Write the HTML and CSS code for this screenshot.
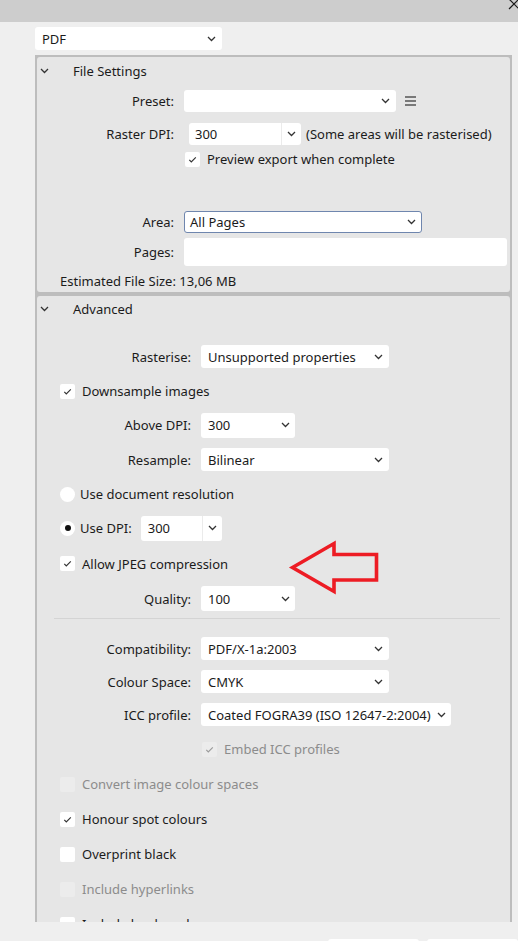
FILE: index.html
```html
<!DOCTYPE html>
<html lang="en">
<head>
<meta charset="utf-8">
<title>Export PDF</title>
<link rel="stylesheet" href="styles.css">
</head>
<body>
<div class="titlebar">
  <svg class="close" width="12" height="12" viewBox="0 0 12 12"><path d="M1 1 L11 11 M1 11 L11 1" stroke="#1a1a1a" stroke-width="1.2" fill="none"/></svg>
</div>

<div class="format-row">
  <div class="select select-format"><span>PDF</span><svg class="chev" width="9" height="6" viewBox="0 0 9 6"><path d="M1 1 L4.5 4.5 L8 1" fill="none" stroke="#333" stroke-width="1.3"/></svg></div>
</div>

<div class="panel">
  <section class="group file">
    <div class="group-head">
      <svg class="chev head-chev" width="9" height="6" viewBox="0 0 9 6"><path d="M1 1 L4.5 4.5 L8 1" fill="none" stroke="#333" stroke-width="1.3"/></svg>
      <span>File Settings</span>
    </div>
    <div class="row h34">
      <span class="lbl">Preset:</span>
      <div class="select w-preset h22"><span></span><svg class="chev" width="9" height="6" viewBox="0 0 9 6"><path d="M1 1 L4.5 4.5 L8 1" fill="none" stroke="#333" stroke-width="1.3"/></svg></div>
      <svg class="menu" width="11" height="10" viewBox="0 0 11 10"><path d="M0 1 H11 M0 5 H11 M0 9 H11" stroke="#555" stroke-width="1.5"/></svg>
    </div>
    <div class="row h31">
      <span class="lbl">Raster DPI:</span>
      <div class="combo w-raster h22 shift5"><span class="val">300</span><span class="drop"><svg class="chev" width="9" height="6" viewBox="0 0 9 6"><path d="M1 1 L4.5 4.5 L8 1" fill="none" stroke="#333" stroke-width="1.3"/></svg></span></div>
      <span class="note">(Some areas will be rasterised)</span>
    </div>
    <div class="row h20 pad-preview">
      <span class="cb"><svg width="15" height="15" viewBox="0 0 15 15"><path d="M4.3 7.8 L6.3 9.8 L10.8 5.3" fill="none" stroke="#333" stroke-width="1.2"/></svg></span>
      <span>Preview export when complete</span>
    </div>
    <div class="spacer36"></div>
    <div class="row h33">
      <span class="lbl">Area:</span>
      <div class="select w-area h22 focus"><span>All Pages</span><svg class="chev" width="9" height="6" viewBox="0 0 9 6"><path d="M1 1 L4.5 4.5 L8 1" fill="none" stroke="#333" stroke-width="1.3"/></svg></div>
    </div>
    <div class="row h28">
      <span class="lbl">Pages:</span>
      <div class="input w-pages"></div>
    </div>
    <div class="row h22 est">Estimated File Size: 13,06 MB</div>
  </section>

  <section class="group adv">
    <div class="group-head h26">
      <svg class="chev head-chev" width="9" height="6" viewBox="0 0 9 6"><path d="M1 1 L4.5 4.5 L8 1" fill="none" stroke="#333" stroke-width="1.3"/></svg>
      <span>Advanced</span>
    </div>
    <div class="adv-body">
      <div class="row h35">
        <span class="lbl">Rasterise:</span>
        <div class="select w-188"><span>Unsupported properties</span><svg class="chev" width="9" height="6" viewBox="0 0 9 6"><path d="M1 1 L4.5 4.5 L8 1" fill="none" stroke="#333" stroke-width="1.3"/></svg></div>
      </div>
      <div class="row h34 opt">
        <span class="cb"><svg width="15" height="15" viewBox="0 0 15 15"><path d="M4.3 7.8 L6.3 9.8 L10.8 5.3" fill="none" stroke="#333" stroke-width="1.2"/></svg></span>
        <span>Downsample images</span>
      </div>
      <div class="row h34">
        <span class="lbl">Above DPI:</span>
        <div class="combo w-94 h25"><span class="val">300</span><span class="drop plain"><svg class="chev" width="9" height="6" viewBox="0 0 9 6"><path d="M1 1 L4.5 4.5 L8 1" fill="none" stroke="#333" stroke-width="1.3"/></svg></span></div>
      </div>
      <div class="row h35">
        <span class="lbl">Resample:</span>
        <div class="select w-188"><span>Bilinear</span><svg class="chev" width="9" height="6" viewBox="0 0 9 6"><path d="M1 1 L4.5 4.5 L8 1" fill="none" stroke="#333" stroke-width="1.3"/></svg></div>
      </div>
      <div class="row h34 opt">
        <span class="rb"></span>
        <span>Use document resolution</span>
      </div>
      <div class="row h34 opt">
        <span class="rb on"></span>
        <span>Use DPI:</span>
        <div class="combo w-81 h25 usedpi"><span class="val">300</span><span class="drop"><svg class="chev" width="9" height="6" viewBox="0 0 9 6"><path d="M1 1 L4.5 4.5 L8 1" fill="none" stroke="#333" stroke-width="1.3"/></svg></span></div>
      </div>
      <div class="row h37 opt">
        <span class="cb"><svg width="15" height="15" viewBox="0 0 15 15"><path d="M4.3 7.8 L6.3 9.8 L10.8 5.3" fill="none" stroke="#333" stroke-width="1.2"/></svg></span>
        <span>Allow JPEG compression</span>
      </div>
      <div class="row h33">
        <span class="lbl">Quality:</span>
        <div class="combo w-94 h25"><span class="val">100</span><span class="drop plain"><svg class="chev" width="9" height="6" viewBox="0 0 9 6"><path d="M1 1 L4.5 4.5 L8 1" fill="none" stroke="#333" stroke-width="1.3"/></svg></span></div>
      </div>
      <div class="sep"></div>
      <div class="row h33">
        <span class="lbl">Compatibility:</span>
        <div class="select w-188"><span>PDF/X-1a:2003</span><svg class="chev" width="9" height="6" viewBox="0 0 9 6"><path d="M1 1 L4.5 4.5 L8 1" fill="none" stroke="#333" stroke-width="1.3"/></svg></div>
      </div>
      <div class="row h33">
        <span class="lbl">Colour Space:</span>
        <div class="select w-188"><span>CMYK</span><svg class="chev" width="9" height="6" viewBox="0 0 9 6"><path d="M1 1 L4.5 4.5 L8 1" fill="none" stroke="#333" stroke-width="1.3"/></svg></div>
      </div>
      <div class="row h33">
        <span class="lbl">ICC profile:</span>
        <div class="select w-icc"><span>Coated FOGRA39 (ISO 12647-2:2004)</span><svg class="chev" width="9" height="6" viewBox="0 0 9 6"><path d="M1 1 L4.5 4.5 L8 1" fill="none" stroke="#333" stroke-width="1.3"/></svg></div>
      </div>
      <div class="row h36 opt-embed disabled">
        <span class="cb off"><svg width="15" height="15" viewBox="0 0 15 15"><path d="M4.3 7.8 L6.3 9.8 L10.8 5.3" fill="none" stroke="#9a9a9a" stroke-width="1.2"/></svg></span>
        <span>Embed ICC profiles</span>
      </div>
      <div class="row h34 opt disabled">
        <span class="cb off"></span>
        <span>Convert image colour spaces</span>
      </div>
      <div class="row h36 opt">
        <span class="cb"><svg width="15" height="15" viewBox="0 0 15 15"><path d="M4.3 7.8 L6.3 9.8 L10.8 5.3" fill="none" stroke="#333" stroke-width="1.2"/></svg></span>
        <span>Honour spot colours</span>
      </div>
      <div class="row h34 opt">
        <span class="cb"></span>
        <span>Overprint black</span>
      </div>
      <div class="row h36 opt disabled">
        <span class="cb off"></span>
        <span>Include hyperlinks</span>
      </div>
      <div class="row h34 opt">
        <span class="cb"><svg width="15" height="15" viewBox="0 0 15 15"><path d="M4.3 7.8 L6.3 9.8 L10.8 5.3" fill="none" stroke="#333" stroke-width="1.2"/></svg></span>
        <span>Include bookmarks</span>
      </div>
    </div>
  </section>
</div>

<div class="footer">
  <div class="btn"></div>
  <div class="btn"></div>
</div>

<svg class="arrow" width="96" height="60" viewBox="0 0 96 60"><polygon points="6.5,30.5 48,6.5 48,17.5 90.5,17.5 90.5,43 48,43 48,54.5" fill="none" stroke="#ed1c24" stroke-width="3.6"/></svg>
</body>
</html>
```

FILE: styles.css
```css
* { box-sizing: border-box; }

html, body { margin: 0; padding: 0; }

body {
  width: 518px;
  height: 941px;
  overflow: hidden;
  position: relative;
  background: #efefef;
  font-family: "Noto Sans", "Open Sans", sans-serif;
  font-size: 13px;
  color: #1b1b1b;
}

.titlebar {
  height: 22px;
  background: #cdcdcd;
  position: relative;
}

.close {
  position: absolute;
  left: 508px;
  top: -2px;
}

.format-row {
  height: 33px;
  padding: 5px 0 5px 35px;
}

.select {
  display: flex;
  align-items: center;
  justify-content: space-between;
  height: 23px;
  padding: 0 6px 0 7px;
  background: #fff;
  border-radius: 3px;
  flex: none;
  white-space: nowrap;
}

.select-format { width: 187px; }

.chev { display: block; flex: none; }

.panel {
  margin-left: 35px;
  width: 477px;
  height: 867px;
  padding: 2px;
  background: #bdbdbd;
  display: flex;
  flex-direction: column;
  gap: 4px;
  overflow: hidden;
}

.group {
  background: #e6e6e6;
  border-radius: 3px;
  flex: none;
}

.group-head {
  height: 27px;
  display: flex;
  align-items: center;
  padding-left: 3px;
}

.group-head.h26 { height: 26px; }

.head-chev { margin-right: 24px; }

.row {
  display: flex;
  align-items: center;
  height: 34px;
  white-space: nowrap;
}

.h20 { height: 20px; }
.h22 { height: 22px; }
.h25 { height: 25px; }
.h28 { height: 28px; }
.h31 { height: 31px; }
.h33 { height: 33px; }
.h34 { height: 34px; }
.h35 { height: 35px; }
.h36 { height: 36px; }
.h37 { height: 37px; }

.lbl {
  flex: none;
  text-align: right;
  margin-right: 10px;
}

.file .lbl { width: 137px; }
.adv .lbl { width: 154px; }

.w-preset { width: 212px; }
.w-area { width: 238px; }
.w-188 { width: 188px; }
.w-94 { width: 94px; }
.w-81 { width: 81px; }
.w-raster { width: 112px; }
.w-icc { width: 250px; padding-right: 5px; }
.w-pages { width: 323px; }

.focus {
  border: 1px solid #6f86ae;
  padding-left: 5px;
  padding-right: 5px;
}

.menu { margin-left: 9px; display: block; }

.combo {
  display: flex;
  align-items: stretch;
  background: #fff;
  border-radius: 3px;
  flex: none;
}

.combo .val {
  flex: 1;
  display: flex;
  align-items: center;
  padding-left: 7px;
}

.combo .drop {
  width: 20px;
  display: flex;
  align-items: center;
  justify-content: center;
  border-left: 1px solid #ebebeb;
}

.combo .drop.plain { border-left-color: transparent; }

.shift5 { margin-left: 5px; }
.shift5 .val { padding-left: 6px; }

.note { margin-left: 5px; }

.input {
  height: 28px;
  background: #fff;
  border-radius: 3px;
}

.cb {
  flex: none;
  width: 15px;
  height: 15px;
  background: #fff;
  border-radius: 2px;
  margin-right: 7px;
  display: block;
}

.cb svg { display: block; }

.cb.off { background: #ececec; }

.rb {
  flex: none;
  width: 15px;
  height: 15px;
  border-radius: 50%;
  background: #fff;
  margin-right: 5px;
  display: flex;
  align-items: center;
  justify-content: center;
}

.rb.on::after {
  content: "";
  width: 6px;
  height: 6px;
  border-radius: 50%;
  background: #111;
}

.usedpi { margin-left: 9px; }

.pad-preview { padding-left: 148px; }

.spacer36 { height: 36px; }

.est {
  margin-top: 4px;
  padding-left: 23px;
}

.adv-body { padding-top: 17px; }

.opt { padding-left: 23px; }

.opt-embed { padding-left: 165px; }

.disabled { color: #8c8c8c; }

.sep {
  height: 1px;
  margin: 3px 10px 13px 17px;
  background: #d4d4d4;
}

.footer {
  display: flex;
  gap: 8px;
  padding: 17px 0 0 328px;
}

.btn {
  width: 91px;
  height: 28px;
  flex: none;
  background: #fff;
  border-radius: 3px;
}

.arrow {
  position: absolute;
  left: 286px;
  top: 537px;
  display: block;
}
```
